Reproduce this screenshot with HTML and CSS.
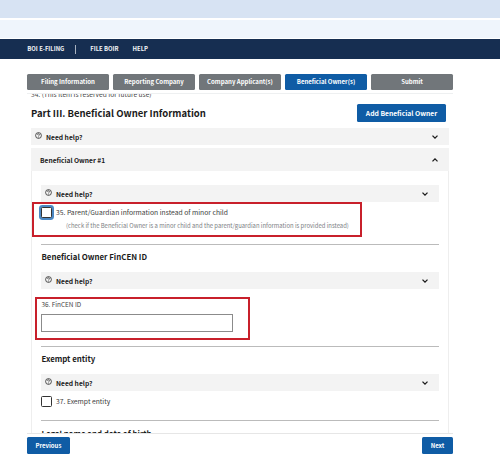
FILE: index.html
```html
<!DOCTYPE html>
<html lang="en">
<head>
<meta charset="utf-8">
<title>BOI E-Filing</title>
<link rel="stylesheet" href="styles.css">
</head>
<body>
<svg class="defs" aria-hidden="true">
  <symbol id="help" viewBox="0 0 24 24"><circle cx="12" cy="12" r="10" fill="none" stroke="currentColor" stroke-width="2.6"/><path d="M8.7 9.6a3.3 3.3 0 1 1 5 2.8c-1.2.8-1.7 1.2-1.7 2.4" fill="none" stroke="currentColor" stroke-width="2.3"/><circle cx="12" cy="17.6" r="1.4" fill="currentColor"/></symbol>
  <symbol id="down" viewBox="0 0 6 4"><path d="M.5.6 3 3.1 5.5.6" fill="none" stroke="currentColor" stroke-width="1.3"/></symbol>
  <symbol id="up" viewBox="0 0 6 4"><path d="M.5 3.4 3 .9l2.5 2.5" fill="none" stroke="currentColor" stroke-width="1.3"/></symbol>
</svg>
<div class="band"></div>
<div class="subband"></div>
<nav class="nav"><b>BOI E-FILING</b><i class="divider"></i><b class="file">FILE BOIR</b><b class="help-link">HELP</b></nav>
<main class="page">
  <div class="tabs">
    <button class="tab">Filing Information</button>
    <button class="tab">Reporting Company</button>
    <button class="tab">Company Applicant(s)</button>
    <button class="tab active">Beneficial Owner(s)</button>
    <button class="tab">Submit</button>
  </div>
  <div class="scroll">
    <p class="reserved">34. (This item is reserved for future use)</p>
    <header class="part">
      <h1>Part III. Beneficial Owner Information</h1>
      <button class="btn add">Add Beneficial Owner</button>
    </header>
    <div class="help outer"><svg class="q"><use href="#help"/></svg><span>Need help?</span><svg class="chev"><use href="#down"/></svg></div>
    <div class="owner"><span>Beneficial Owner #1</span><svg class="chev"><use href="#up"/></svg></div>
    <div class="card">
      <section class="sec minor">
        <div class="help"><svg class="q"><use href="#help"/></svg><span>Need help?</span><svg class="chev"><use href="#down"/></svg></div>
        <div class="check"><i class="box focus"></i><span class="label35">35. Parent/Guardian information instead of minor child</span></div>
        <p class="hint">(check if the Beneficial Owner is a minor child and the parent/guardian information is provided instead)</p>
        <div class="mark mark-a"></div>
      </section>
      <section class="sec fincen">
        <h2>Beneficial Owner FinCEN ID</h2>
        <div class="help"><svg class="q"><use href="#help"/></svg><span>Need help?</span><svg class="chev"><use href="#down"/></svg></div>
        <label class="field">36. FinCEN ID</label>
        <input class="input" type="text">
        <div class="mark mark-b"></div>
      </section>
      <section class="sec exempt">
        <h2>Exempt entity</h2>
        <div class="help"><svg class="q"><use href="#help"/></svg><span>Need help?</span><svg class="chev"><use href="#down"/></svg></div>
        <div class="check"><i class="box"></i><span class="label37">37. Exempt entity</span></div>
      </section>
      <section class="sec"><h2 class="legal">Legal name and date of birth</h2></section>
    </div>
  </div>
  <footer class="foot"><button class="btn prev">Previous</button><button class="btn next">Next</button></footer>
</main>
</body>
</html>
```
FILE: styles.css
```css
* { box-sizing: border-box; }
body { margin: 0; height: 461px; overflow: hidden; background: #fff; color: #1b1b1b; font-family: "Noto Sans CJK SC", "Open Sans", sans-serif; font-size: 7px; line-height: 10px; }
h1, h2, p { margin: 0; }
button { border: 0; padding: 0; margin: 0; font: inherit; font-weight: 700; color: #fff; white-space: nowrap; }
.defs { position: absolute; width: 0; height: 0; }
.band { height: 18px; background: #d7e3f3; }
.subband { height: 18px; margin-top: 2px; background: #eff5fc; }
.nav { display: flex; align-items: center; height: 20px; margin-top: 1px; padding-left: 27.3px; background: #162e51; color: #f3f5f8; font-size: 5.9px; }
.divider { width: 1px; height: 9px; margin-left: 11px; background: #a9b3c1; }
.file { margin-left: 14px; }
.help-link { margin-left: 14px; }
.page { width: 426px; margin-left: 27px; padding-top: 15px; }
.tabs { display: grid; grid-template-columns: repeat(5, 82px); gap: 4px; }
.tab { height: 16px; border-radius: 1.5px; background: #71767a; font-size: 6.05px; }
.active { background: #0f5ca5; }
.scroll { height: 341px; margin-top: 3px; padding: 0 4px; overflow: hidden; border-top: 1px solid #eef0f1; border-bottom: 1px solid #e6e6e6; }
.reserved { height: 10px; margin-top: -5px; color: #444; font-size: 6.6px; }
.part { display: flex; justify-content: space-between; align-items: center; height: 18px; margin-top: 5px; padding-right: 3px; }
h1 { font-size: 9.5px; line-height: 18px; white-space: nowrap; }
.btn { height: 17px; border-radius: 1.5px; background: #0f5ca5; }
.add { width: 89px; height: 18px; font-size: 6.75px; }
.help { display: flex; align-items: center; height: 17px; padding: 0 11px 0 4px; background: #f3f3f3; font-weight: 700; font-size: 6.7px; }
.outer { margin-top: 6px; }
.q { width: 7px; height: 7px; margin: -2px 4px 0 0; color: #222; }
.chev { width: 6px; height: 4px; margin-left: auto; }
.owner { display: flex; align-items: center; height: 23px; margin-top: 3px; padding: 0 11px 0 9px; background: #f3f3f3; font-size: 6.65px; font-weight: 700; }
.card { padding: 14px 9px 0; height: 300px; border: solid #eee; border-width: 0 1px; }
.sec { position: relative; border-top: 1px solid #bbb; }
.minor { height: 59px; border-top: 0; }
.fincen { height: 102px; }
.exempt { height: 74px; }
h2 { height: 27px; padding: 5px 0 0 .5px; line-height: 14px; font-size: 7.85px; white-space: nowrap; }
.legal { padding-top: 6px; }
.check { display: flex; align-items: center; height: 20px; gap: 4px; color: #3d3d3d; white-space: nowrap; }
.box { width: 11px; height: 11px; flex: none; border: 1px solid #333; border-radius: 1.5px; background: #fff; }
.focus { box-shadow: 0 0 0 2px #4b88c4; }
.label35, .label37 { font-size: 6.75px; }
.hint { margin: -1px 0 0 25px; color: #7d8084; font-size: 5.92px; line-height: 10px; white-space: nowrap; }
.field { display: block; height: 25px; padding: 11px 0 0 .5px; color: #444; font-size: 6.4px; }
.input { display: block; width: 192px; height: 18px; padding: 0; border: 1px solid #8b8b8b; background: #fff; }
.mark { position: absolute; border: 2px solid #c8202b; }
.mark-a { left: -9px; top: 17px; width: 330px; height: 35px; }
.mark-b { left: -6px; top: 52px; width: 215px; height: 43px; }
.foot { display: flex; justify-content: space-between; margin-top: 3px; }
.prev { width: 43px; font-size: 6px; }
.next { width: 31px; font-size: 6px; }
```
